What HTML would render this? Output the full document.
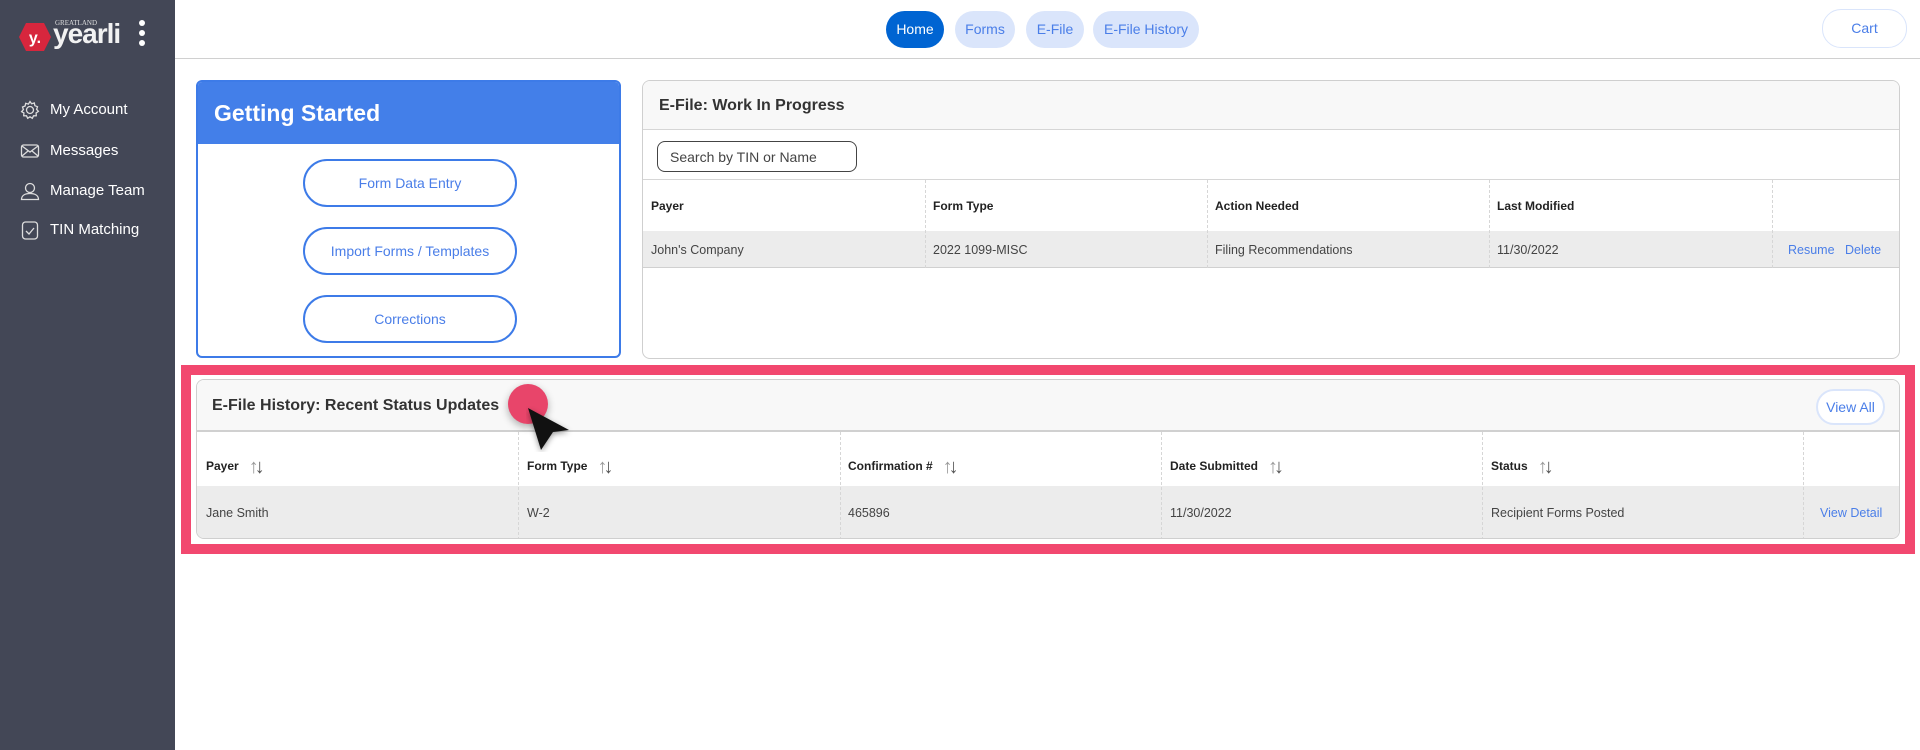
<!DOCTYPE html>
<html><head><meta charset="utf-8"><style>
*{box-sizing:border-box;margin:0;padding:0}
body{width:1920px;height:750px;position:relative;background:#fff;font-family:"Liberation Sans",Arial,sans-serif;overflow:hidden;color:#333}
.a{position:absolute}
#side{left:0;top:0;width:175px;height:750px;background:#434756}
.nav{color:#fff;font-size:15px;left:50px}
.ico{left:20px;width:20px;height:20px}
.top{top:11px;height:37px;border-radius:19px;font-size:14px;line-height:37px;text-align:center;background:#dae5fb;color:#4a7ee8}
.card{border:1px solid #cfcfcf;border-radius:8px;overflow:hidden;background:#fff}
.gbtn{left:105px;width:214px;height:48px;border:2px solid #3d7be8;border-radius:24px;color:#4a7ee8;font-size:14px;text-align:center;line-height:44px}
.th{font-size:12px;font-weight:bold;color:#222}
.td{font-size:12.5px;color:#444}
.vl{border-left:1px dashed #d6d6d6}
.lnk{color:#4a7ee8;font-size:12.5px}
.sort{font-weight:normal;font-size:20px;letter-spacing:-4px;position:relative;top:3px;margin-left:10px}
.sort i{font-style:normal;color:#9a9a9a}
.sort b{font-weight:normal;color:#555}
</style></head><body>
<div id="side" class="a">
  <svg class="a" style="left:18px;top:22px" width="34" height="30" viewBox="0 0 34 30"><polygon points="8,1 26,1 33,15 26,29 8,29 1,15" fill="#d7263d"/><text x="17" y="21" font-size="16" font-weight="bold" fill="#fff" text-anchor="middle" font-family="Liberation Sans">y.</text></svg>
  <div class="a" style="left:55px;top:19px;font-size:7px;color:#ddd;font-family:'Liberation Serif'">GREATLAND</div>
  <div class="a" style="left:53px;top:18px;font-size:28px;font-weight:bold;color:#f2f2f2;letter-spacing:-1px">yearli</div>
  <div class="a" style="left:139px;top:20px;width:6px;height:6px;border-radius:3px;background:#fff"></div>
  <div class="a" style="left:139px;top:30px;width:6px;height:6px;border-radius:3px;background:#fff"></div>
  <div class="a" style="left:139px;top:40px;width:6px;height:6px;border-radius:3px;background:#fff"></div>
  <svg class="a ico" style="top:100px" viewBox="0 0 20 20" fill="none" stroke="#ddd" stroke-width="1.3"><circle cx="10" cy="10" r="3.5"/><path d="M10 1.5l1.6 2.3 2.7-.8.6 2.7 2.6 1-.9 2.6 1.8 2.1-2.3 1.5.2 2.8-2.8.1-1.2 2.5-2.3-1.5-2.3 1.5-1.2-2.5-2.8-.1.2-2.8L1.6 11.7l1.8-2.1-.9-2.6 2.6-1 .6-2.7 2.7.8z"/></svg>
  <div class="a nav" style="top:101px">My Account</div>
  <svg class="a ico" style="top:141px" viewBox="0 0 20 20" fill="none" stroke="#ddd" stroke-width="1.3"><rect x="1.5" y="4" width="17" height="12" rx="2"/><path d="M2 5l8 6 8-6M2 15l6-5M18 15l-6-5"/></svg>
  <div class="a nav" style="top:142px">Messages</div>
  <svg class="a ico" style="top:181px" viewBox="0 0 20 20" fill="none" stroke="#ddd" stroke-width="1.3"><circle cx="10" cy="7" r="4.5"/><path d="M1.5 18.5c0-4 3.5-6 8.5-6s8.5 2 8.5 6z"/></svg>
  <div class="a nav" style="top:182px">Manage Team</div>
  <svg class="a ico" style="top:220px" viewBox="0 0 20 20" fill="none" stroke="#ddd" stroke-width="1.3"><rect x="2.5" y="2" width="15" height="17" rx="3"/><path d="M6 11l3 3 5-6"/></svg>
  <div class="a nav" style="top:221px">TIN Matching</div>
</div>
<div class="a" style="left:175px;top:58px;width:1745px;height:1px;background:#d0d0d0"></div>
<div class="a top" style="left:886px;width:58px;background:#0064d2;color:#fff">Home</div>
<div class="a top" style="left:955px;width:60px">Forms</div>
<div class="a top" style="left:1026px;width:58px">E-File</div>
<div class="a top" style="left:1093px;width:106px">E-File History</div>
<div class="a top" style="left:1822px;top:9px;height:39px;width:85px;background:#fff;border:1.5px solid #dae5fb;color:#4a7ee8;line-height:36px">Cart</div>

<div class="a" style="left:196px;top:80px;width:425px;height:278px;border:2px solid #3d7be8;border-radius:6px;overflow:hidden">
  <div class="a" style="left:0;top:0;width:100%;height:62px;background:#437fe9;color:#fff;font-size:23px;font-weight:bold;padding:18px 0 0 16px">Getting Started</div>
  <div class="gbtn a" style="top:77px">Form Data Entry</div>
  <div class="gbtn a" style="top:145px">Import Forms / Templates</div>
  <div class="gbtn a" style="top:213px">Corrections</div>
</div>

<div class="a card" style="left:642px;top:80px;width:1258px;height:279px">
  <div class="a" style="left:0;top:0;width:100%;height:49px;background:#f8f8f8;border-bottom:1px solid #d6d6d6;font-size:16px;font-weight:bold;padding:16px 0 0 16px;color:#333">E-File: Work In Progress</div>
  <div class="a" style="left:14px;top:60px;width:200px;height:31px;border:1px solid #444;border-radius:8px;font-size:14px;color:#444;padding:7px 0 0 12px">Search by TIN or Name</div>
  <div class="a" style="left:0;top:98px;width:100%;height:1px;background:#d6d6d6"></div>
  <div class="a" style="left:0;top:150px;width:100%;height:37px;background:#ececec;border-bottom:1px solid #d0d0d0"></div>
  <div class="a vl" style="left:282px;top:99px;height:88px"></div>
  <div class="a vl" style="left:564px;top:99px;height:88px"></div>
  <div class="a vl" style="left:846px;top:99px;height:88px"></div>
  <div class="a vl" style="left:1129px;top:99px;height:88px"></div>
  <div class="a th" style="left:8px;top:118px">Payer</div>
  <div class="a th" style="left:290px;top:118px">Form Type</div>
  <div class="a th" style="left:572px;top:118px">Action Needed</div>
  <div class="a th" style="left:854px;top:118px">Last Modified</div>
  <div class="a td" style="left:8px;top:162px">John's Company</div>
  <div class="a td" style="left:290px;top:162px">2022 1099-MISC</div>
  <div class="a td" style="left:572px;top:162px">Filing Recommendations</div>
  <div class="a td" style="left:854px;top:162px">11/30/2022</div>
  <div class="a lnk" style="left:1145px;top:162px">Resume</div>
  <div class="a lnk" style="left:1202px;top:162px">Delete</div>
</div>

<div class="a" style="left:181px;top:365px;width:1734px;height:189px;border:10px solid #f2486f"></div>

<div class="a card" style="left:196px;top:379px;width:1704px;height:160px">
  <div class="a" style="left:0;top:0;width:100%;height:52px;background:#f8f8f8;border-bottom:2px solid #d0d0d0;font-size:16px;font-weight:bold;padding:17px 0 0 15px;color:#333">E-File History: Recent Status Updates</div>
  <div class="a" style="left:1619px;top:9px;width:69px;height:36px;border:2px solid #dae5fb;border-radius:18px;background:#fff;color:#4a7ee8;font-size:14px;text-align:center;line-height:32px">View All</div>
  <div class="a" style="left:0;top:106px;width:100%;height:54px;background:#ececec"></div>
  <div class="a vl" style="left:321px;top:52px;height:108px"></div>
  <div class="a vl" style="left:643px;top:52px;height:108px"></div>
  <div class="a vl" style="left:964px;top:52px;height:108px"></div>
  <div class="a vl" style="left:1285px;top:52px;height:108px"></div>
  <div class="a vl" style="left:1606px;top:52px;height:108px"></div>
  <div class="a th" style="left:9px;top:73px">Payer<span class="sort"><i>↑</i><b>↓</b></span></div>
  <div class="a th" style="left:330px;top:73px">Form Type<span class="sort"><i>↑</i><b>↓</b></span></div>
  <div class="a th" style="left:651px;top:73px">Confirmation #<span class="sort"><i>↑</i><b>↓</b></span></div>
  <div class="a th" style="left:973px;top:73px">Date Submitted<span class="sort"><i>↑</i><b>↓</b></span></div>
  <div class="a th" style="left:1294px;top:73px">Status<span class="sort"><i>↑</i><b>↓</b></span></div>
  <div class="a td" style="left:9px;top:126px">Jane Smith</div>
  <div class="a td" style="left:330px;top:126px">W-2</div>
  <div class="a td" style="left:651px;top:126px">465896</div>
  <div class="a td" style="left:973px;top:126px">11/30/2022</div>
  <div class="a td" style="left:1294px;top:126px">Recipient Forms Posted</div>
  <div class="a lnk" style="left:1623px;top:126px">View Detail</div>
</div>

<div class="a" style="left:508px;top:384px;width:40px;height:40px;border-radius:20px;background:#e8456a;box-shadow:0 3px 8px rgba(0,0,0,.3)"></div>
<svg class="a" style="left:526px;top:406px" width="50" height="46" viewBox="0 0 50 46"><path d="M2 2L43 24 27 26 15 44Z" fill="#111" style="filter:drop-shadow(0 2px 3px rgba(0,0,0,.4))"/></svg>
</body></html>
